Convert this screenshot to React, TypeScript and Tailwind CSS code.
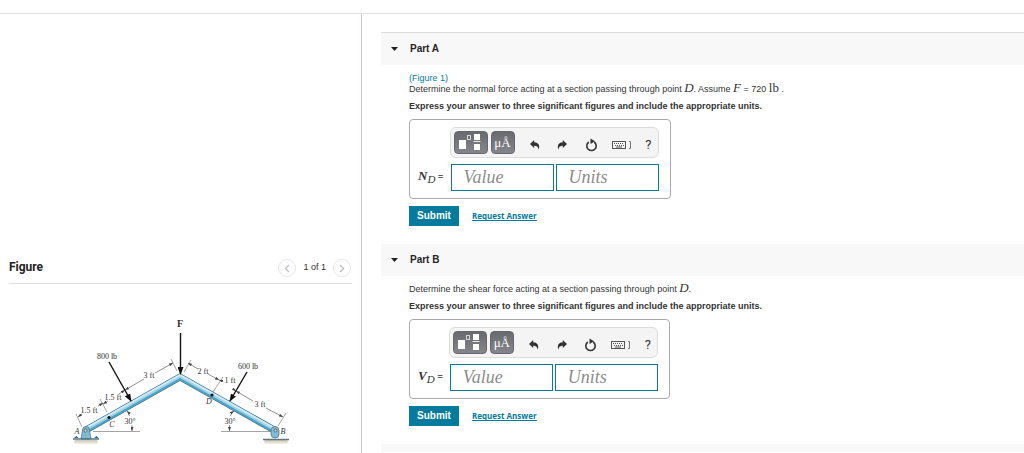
import React, { useState } from "react";

const sans = "font-['Liberation_Sans',sans-serif]";
const serif = "font-['Liberation_Serif',serif]";

function TemplateIcon() {
  return (
    <svg width="32" height="21" viewBox="0 0 32 21" fill="none" className="shrink-0">
      <rect x="4" y="8" width="7" height="9" fill="#fff" />
      <rect x="12.5" y="3.5" width="3" height="4" stroke="#d5d5d8" />
      <rect x="19" y="2" width="6" height="6" fill="#fff" />
      <path d="M18.5 9.5h7" stroke="#e8e8e8" />
      <rect x="19" y="12" width="6" height="6" fill="#fff" />
    </svg>
  );
}

function UndoIcon({ flip = false }: { flip?: boolean }) {
  return (
    <svg
      width="10"
      height="10"
      viewBox="0 0 10 10"
      className={flip ? "-scale-x-100" : ""}
    >
      <path
        d="M0 4 4.2 0v2.3C8 2.4 10.4 5 8.6 9.7 8.5 7 7 5.8 4.2 5.8V8z"
        fill="#333"
      />
    </svg>
  );
}

function ResetIcon() {
  return (
    <svg width="13" height="14" viewBox="0 0 13 14" fill="none">
      <path d="M9.2 4A4.7 4.7 0 1 1 3.8 4" stroke="#333" strokeWidth="1.6" />
      <path d="M5.5 0.5v5.5L10 3.2z" fill="#333" />
    </svg>
  );
}

function KeyboardIcon() {
  return (
    <svg width="20" height="10" viewBox="0 0 20 10" fill="none">
      <rect x="0.5" y="1.5" width="13" height="7" stroke="#555" />
      <path d="M2 3.5h10M3 5.5h9" stroke="#555" strokeDasharray="1 1" />
      <path d="M4 7h6" stroke="#555" />
      <path d="M17 1.5h1.5v7H17" stroke="#777" />
    </svg>
  );
}

function Toolbar() {
  const dark =
    "flex h-[23px] items-center justify-center rounded-sm border border-[#66676c] bg-linear-to-b from-[#696a70] to-[#85868b]";
  return (
    <div className="-ml-px flex h-[31px] items-center rounded-md border border-[#dcdcdc] bg-[#f4f4f4] pl-[3px] pr-1">
      <button type="button" aria-label="Templates" className={`${dark} w-[34px]`}>
        <TemplateIcon />
      </button>
      <button
        type="button"
        aria-label="Units symbols"
        className={`${dark} ml-[3px] w-6 text-[13px] leading-none text-white ${serif}`}
      >
        μÅ
      </button>
      <div className="flex flex-1 items-center justify-between pl-[15px] pr-[2px] pt-[5px]">
        <button type="button" aria-label="Undo">
          <UndoIcon />
        </button>
        <button type="button" aria-label="Redo" className="ml-1">
          <UndoIcon flip />
        </button>
        <button type="button" aria-label="Reset" className="ml-1">
          <ResetIcon />
        </button>
        <button type="button" aria-label="Keyboard shortcuts">
          <KeyboardIcon />
        </button>
        <button
          type="button"
          aria-label="Help"
          className="font-[Roboto,sans-serif] text-[13px] leading-4 text-[#333]"
        >
          ?
        </button>
      </div>
    </div>
  );
}

function AnswerBox({ id, symbol }: { id: string; symbol: string }) {
  const [answer, setAnswer] = useState({ value: "", units: "" });
  const handleChange = (e: React.ChangeEvent<HTMLInputElement>) => {
    setAnswer({ ...answer, [e.target.name]: e.target.value });
  };
  const field = `h-[27px] w-[103px] border border-[#047a9c] bg-white pl-3 text-lg leading-none italic text-[#333] outline-none placeholder:text-[#8c8c8c] ${serif}`;
  return (
    <form onSubmit={(e) => e.preventDefault()}>
      <div className="flex w-fit items-end rounded-[4px] border border-[#a9a9a9] py-[7px] pl-2 pr-[11px]">
        <label
          htmlFor={`${id}-value`}
          className={`mr-[7px] mb-[6px] text-[13px] leading-4 font-bold italic text-[#333] ${serif}`}
        >
          {symbol}
          <sub className="text-[11px] font-normal">D</sub>
          <span className="text-[10px] not-italic"> =</span>
        </label>
        <div className="flex flex-col gap-[6px]">
          <Toolbar />
          <div className="flex gap-[2px]">
            <input
              id={`${id}-value`}
              name="value"
              placeholder="Value"
              className={field}
              onChange={handleChange}
              value={answer.value}
            />
            <input
              name="units"
              aria-label="Units"
              placeholder="Units"
              className={field}
              onChange={handleChange}
              value={answer.units}
            />
          </div>
        </div>
      </div>
      <div className="mt-[7px] flex items-center gap-[13px]">
        <button
          type="submit"
          className={`h-5 w-[50px] bg-[#047a9c] text-[10px] leading-4 font-bold text-white ${sans}`}
        >
          Submit
        </button>
        <a
          href="#"
          className="border-b border-[#047a9c] font-['Open_Sans',sans-serif] text-[8px] leading-[9px] font-bold text-[#047a9c]"
        >
          Request Answer
        </a>
      </div>
    </form>
  );
}

function PartHeader({ title }: { title: string }) {
  return (
    <h2 className="flex h-8 items-center bg-[#f8f8f8] pl-[10px] text-[10px] leading-4 font-bold text-[#252525]">
      <svg width="7" height="4" viewBox="0 0 7 4" className="mr-3">
        <path d="M0 0h7L3.5 4z" fill="#222" />
      </svg>
      {title}
    </h2>
  );
}

function MathText({ children }: { children: React.ReactNode }) {
  return <span className={`text-[13px] leading-[10px] italic ${serif}`}>{children}</span>;
}

function FrameDiagram() {
  return (
    <svg
      viewBox="60 310 240 140"
      width="240"
      height="140"
      className={serif}
      fontSize="8"
      fill="#333"
      role="img"
      aria-label="Two-member frame with loads"
    >
      <defs>
        <linearGradient id="ground" x1="0" y1="0" x2="0" y2="1">
          <stop offset="0" stopColor="#c9c4b4" />
          <stop offset="1" stopColor="#f4f1e8" />
        </linearGradient>
        <marker
          id="load"
          viewBox="0 0 8 6"
          refX="7"
          refY="3"
          markerWidth="8"
          markerHeight="6"
          markerUnits="userSpaceOnUse"
          orient="auto"
        >
          <path d="M0 0 8 3 0 6z" fill="#111" />
        </marker>
        <marker
          id="dim"
          viewBox="0 0 4 3"
          refX="4"
          refY="1.5"
          markerWidth="4"
          markerHeight="3"
          markerUnits="userSpaceOnUse"
          orient="auto-start-reverse"
        >
          <path d="M0 0 4 1.5 0 3z" fill="#444" />
        </marker>
      </defs>

      {/* ground */}
      <rect x="74" y="440" width="24" height="4" rx="2" fill="url(#ground)" />
      <rect x="264" y="440" width="24" height="4" rx="2" fill="url(#ground)" />

      {/* members */}
      <g fill="none" strokeLinejoin="round">
        <path d="M86 430 180 377 276 431" stroke="#4e6f7e" strokeWidth="7" />
        <path d="M86 430 180 377 276 431" stroke="#4ca5c9" strokeWidth="5.6" />
        <path d="M86 429 180 376 276 430" stroke="#9fd2e6" strokeWidth="3.6" />
        <path d="M86 428 180 375 276 429" stroke="#d3ebf4" strokeWidth="1.6" />
      </g>

      {/* supports */}
      <path
        d="M81 439 82.5 430a3.5 3.5 0 0 1 7 0L91 439z"
        fill="#82bbd1"
        stroke="#3d7185"
        strokeWidth="0.7"
      />
      <circle cx="85.5" cy="430.5" r="1.6" fill="#c6d8df" stroke="#445" strokeWidth="0.7" />
      <path d="M73 439h26" stroke="#466f7f" strokeWidth="1.4" />
      <path d="m74 438 2.5-2 2 2zM94 438l2.5-2 2 2z" fill="#37616f" />
      <path
        d="M271 434a4 4 0 1 0 8 0v-3.5a4 4 0 0 0-8 0z"
        fill="#82bbd1"
        stroke="#3d7185"
        strokeWidth="0.7"
      />
      <circle cx="275.5" cy="430.5" r="1.5" fill="#c6d8df" stroke="#445" strokeWidth="0.7" />
      <path d="M263 439.5h26" stroke="#5f7580" strokeWidth="1.5" />

      {/* dimension lines */}
      <g fill="none" stroke="#666" strokeWidth="0.6">
        <path d="m76 414 6 13M100 399l7 13M171 359l6 12" />
        <path d="M191 360l-7 12M223 377l-10 15M286 413l-8 13" />
        <path d="M93 431.5h47M221 431.5h49" />
        <g stroke="#444">
          <path d="m82 414-4 3" markerEnd="url(#dim)" />
          <path d="m98 406 5-3" markerEnd="url(#dim)" />
          <path d="m108 401-5 3" markerEnd="url(#dim)" />
          <path d="m119 394 6-4" markerEnd="url(#dim)" />
          <path d="m144 379-19 11" markerEnd="url(#dim)" />
          <path d="m155 373 18-10" markerEnd="url(#dim)" />
          <path d="m198 369-10-6" markerEnd="url(#dim)" />
          <path d="m208 374 11 6" markerEnd="url(#dim)" />
          <path d="m222 381-3-1" markerEnd="url(#dim)" />
          <path d="m253 401-17-10" markerEnd="url(#dim)" />
          <path d="m233 389 3 2" markerEnd="url(#dim)" />
          <path d="m266 408 17 9" markerEnd="url(#dim)" />
          <path d="M127 411q2 2 2.5 5" markerStart="url(#dim)" />
          <path d="M132 425v6" markerEnd="url(#dim)" />
          <path d="M234 411q-3 2-3.5 5" markerStart="url(#dim)" />
          <path d="M229.5 425v6" markerEnd="url(#dim)" />
        </g>
      </g>

      {/* loads */}
      <g stroke="#111" strokeWidth="1.4">
        <path d="M180.5 333v41" markerEnd="url(#load)" />
        <path d="m109 362 22 39" markerEnd="url(#load)" />
        <path d="m247 372-17 29" markerEnd="url(#load)" />
      </g>
      <circle cx="109" cy="417.5" r="1.6" fill="#111" />
      <circle cx="212" cy="395" r="1.6" fill="#111" />

      <g textAnchor="middle">
        <text x="180" y="327" fontSize="10" fontWeight="bold">F</text>
        <text x="107" y="359">800 lb</text>
        <text x="248" y="369">600 lb</text>
        <text x="89" y="413">1.5 ft</text>
        <text x="113" y="400">1.5 ft</text>
        <text x="149" y="378">3 ft</text>
        <text x="203" y="374">2 ft</text>
        <text x="230" y="383">1 ft</text>
        <text x="260" y="407">3 ft</text>
        <text x="130" y="424">30°</text>
        <text x="230" y="424">30°</text>
        <g fontStyle="italic">
          <text x="77" y="434">A</text>
          <text x="283" y="434">B</text>
          <text x="112" y="427">C</text>
          <text x="209" y="404">D</text>
        </g>
      </g>
    </svg>
  );
}

function FigurePanel() {
  const round =
    "flex size-[18px] items-center justify-center rounded-full border border-[#e6e6e6]";
  return (
    <aside className="flex w-[362px] shrink-0 flex-col justify-end border-r border-[#c4c8d4] px-[9px] pb-[3px]">
      <div className="flex h-[25px] items-start justify-between border-b border-[#dedede]">
        <h2 className="font-[Roboto,sans-serif] text-xs leading-4 font-bold text-[#222]">
          Figure
        </h2>
        <div className="flex items-center gap-[7px] pr-px text-[9px] text-[#333]">
          <button type="button" aria-label="Previous figure" className={round}>
            <svg width="6" height="9" viewBox="0 0 6 9" fill="none">
              <path d="M5 1 1.5 4.5 5 8" stroke="#bbb" strokeWidth="1.3" />
            </svg>
          </button>
          <span>1 of 1</span>
          <button type="button" aria-label="Next figure" className={round}>
            <svg width="6" height="9" viewBox="0 0 6 9" fill="none">
              <path d="M1 1l3.5 3.5L1 8" stroke="#bbb" strokeWidth="1.3" />
            </svg>
          </button>
        </div>
      </div>
      <div className="mt-[26px] pl-[51px]">
        <FrameDiagram />
      </div>
    </aside>
  );
}

export default function App() {
  return (
    <div className={`flex min-h-screen flex-col bg-white pt-[13px] text-[9px] text-[#333] ${sans}`}>
      <div className="flex flex-1 border-t border-[#e0e0e0]">
        <FigurePanel />
        <main className="flex-1 pl-[19px] pt-[18px]">
          <section>
            <div className="border-t border-[#dcdcdc]">
              <PartHeader title="Part A" />
            </div>
            <div className="pl-7 pt-2 pb-[18px]">
              <p className="leading-[10px]">
                <a href="#" className="text-[#047a9c]">
                  (Figure 1)
                </a>
                <br />
                Determine the normal force acting at a section passing through
                point <MathText>D</MathText>. Assume <MathText>F</MathText> = 720{" "}
                <span className={`text-[13px] leading-[10px] ${serif}`}>lb</span> .
              </p>
              <p className="mt-[7px] mb-2 leading-[10px] font-bold">
                Express your answer to three significant figures and include the
                appropriate units.
              </p>
              <AnswerBox id="normal" symbol="N" />
            </div>
          </section>
          <section>
            <PartHeader title="Part B" />
            <div className="pl-7 pt-[7px] pb-[18px]">
              <p className="leading-[10px]">
                Determine the shear force acting at a section passing through
                point <MathText>D</MathText>.
              </p>
              <p className="mt-[7px] mb-2 leading-[10px] font-bold">
                Express your answer to three significant figures and include the
                appropriate units.
              </p>
              <AnswerBox id="shear" symbol="V" />
            </div>
          </section>
          <div className="h-2 bg-[#f8f8f8]" />
        </main>
      </div>
    </div>
  );
}
